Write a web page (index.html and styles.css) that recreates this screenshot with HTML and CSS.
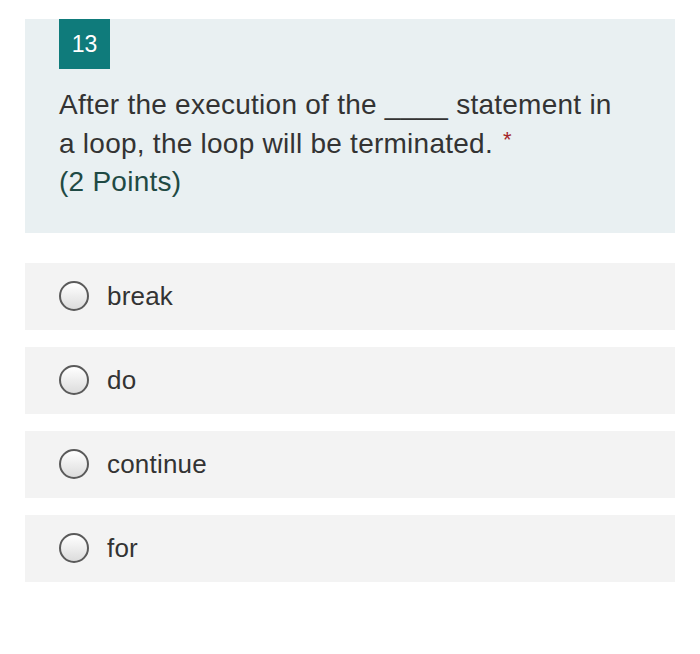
FILE: index.html
```html
<!DOCTYPE html>
<html>
<head>
<meta charset="utf-8">
<link rel="stylesheet" href="styles.css">
</head>
<body>
<div class="page">
  <div class="question">
    <div class="badge">13</div>
    <div class="qtext">After the execution of the ____ statement in a loop, the loop will be terminated.&nbsp;<sup class="req">*</sup><br><span class="points">(2 Points)</span></div>
  </div>
  <div class="options">
    <label class="option"><span class="radio"></span><span class="label">break</span></label>
    <label class="option"><span class="radio"></span><span class="label">do</span></label>
    <label class="option"><span class="radio"></span><span class="label">continue</span></label>
    <label class="option"><span class="radio"></span><span class="label">for</span></label>
  </div>
</div>
</body>
</html>
```
FILE: styles.css
```css
html, body {
  margin: 0;
  padding: 0;
  background: #ffffff;
}
.page {
  padding: 19px 25px 0 25px;
  font-family: "Liberation Sans", Arial, sans-serif;
  color: #333333;
}
.question {
  background: #e9f0f2;
  padding: 0 52px 31px 34px;
  display: flex;
  flex-direction: column;
  align-items: flex-start;
}
.badge {
  width: 51px;
  height: 50px;
  background: #0f7b7b;
  color: #ffffff;
  font-size: 23px;
  display: flex;
  align-items: center;
  justify-content: center;
}
.qtext {
  margin-top: 17px;
  font-size: 28px;
  letter-spacing: 0.25px;
  line-height: 38.5px;
  color: #333333;
}
.req {
  color: #a4262c;
  font-size: 22px;
  line-height: 1;
  vertical-align: 6px;
  margin-left: 2px;
}
.points {
  color: #1f4a44;
}
.options {
  margin-top: 30px;
  display: flex;
  flex-direction: column;
  gap: 17px;
}
.option {
  background: #f3f3f3;
  height: 67px;
  padding-left: 34px;
  display: flex;
  align-items: center;
  gap: 18px;
}
.radio {
  width: 26px;
  height: 26px;
  border: 2px solid #5a5a5a;
  border-radius: 50%;
  background: linear-gradient(#ffffff, #dcdcdc);
  flex: none;
}
.label {
  font-size: 26px;
  letter-spacing: 0.2px;
  color: #333333;
}
```
